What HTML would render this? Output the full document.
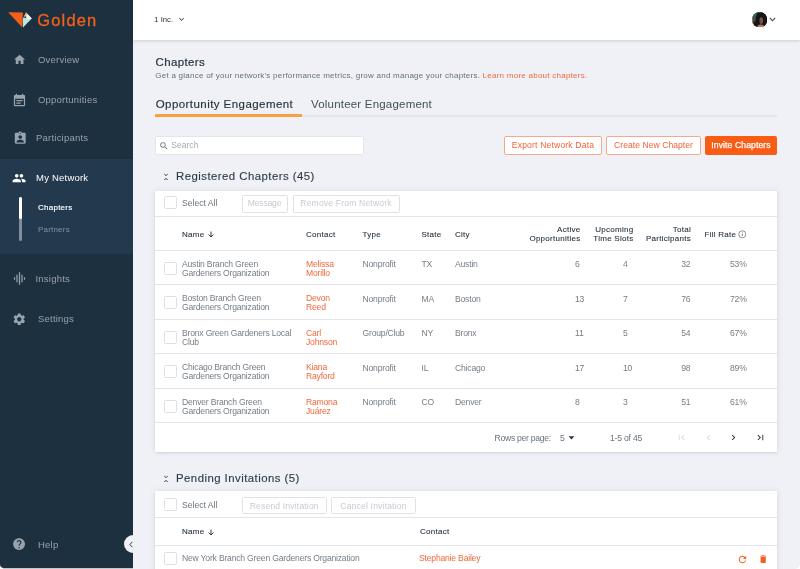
<!DOCTYPE html>
<html>
<head>
<meta charset="utf-8">
<title>Golden - Chapters</title>
<style>
*{box-sizing:border-box;margin:0;padding:0}
html,body{width:800px;height:569px;overflow:hidden}
body{font-family:"Liberation Sans",sans-serif;background:#eff1f6;color:#2d3a46;position:relative;font-size:8px}
#wrap{position:absolute;left:0;top:0;width:800px;height:569px;overflow:hidden;will-change:transform}
.abs,.t{position:absolute;white-space:nowrap}
.t{line-height:10px;transform:translateY(-50%)}
#side{position:absolute;left:0;top:0;width:133px;height:568px;background:#1c3040;border-bottom-left-radius:4px}
#side .act{position:absolute;left:0;top:159px;width:133px;height:95px;background:#233a4e}
.nav{color:#98a1a9;font-size:9.5px;letter-spacing:.22px}
.nav.on{color:#fff}
.sub{font-size:8px;letter-spacing:.2px;color:#8391a0}
.sub.on{color:#fff;letter-spacing:.25px;-webkit-text-stroke:.15px #fff}
#top{position:absolute;left:133px;top:0;width:667px;height:40px;background:#fff;box-shadow:0 1px 3px rgba(40,50,70,.18)}
.card{position:absolute;left:155px;width:622px;background:#fff;box-shadow:0 1px 2px rgba(40,50,70,.10),0 0 6px rgba(40,50,70,.10)}
.hl{position:absolute;left:0;width:622px;height:1px;background:#e3e5ea}
.cb{position:absolute;width:13px;height:13px;border:1px solid #dee1e4;border-radius:1.5px;background:#fff}
.btn{position:absolute;border:1px solid #f4a98f;border-radius:2px;background:#fff;color:#f4633a;font-size:8.600px;letter-spacing:.16px;text-align:center;line-height:16.800px;height:18.500px;white-space:nowrap}
.btn.fill{background:#f95c14;border-color:#f95c14;color:#fff;letter-spacing:.1px;-webkit-text-stroke:.25px #fff;border-radius:1.500px}
.btn.dis{border-color:#e0e3e6;color:#c6cbd1;border-radius:1.5px}
.h2{font-size:10.800px;letter-spacing:.43px;color:#2d3a46;-webkit-text-stroke:.12px #2d3a46;transform:translateY(-50%) scaleX(1.055);transform-origin:0 50%}
.th{font-size:8px;letter-spacing:.27px;color:#27333f;-webkit-text-stroke:.1px #27333f}
.td{font-size:8.600px;letter-spacing:-.2px;color:#757e87}
.or{color:#f2693c}
.r{text-align:right}
.l2{line-height:9.100px}
</style>
</head>
<body>
<div id="wrap">

<!-- SIDEBAR -->
<div class="abs" style="left:0;top:562px;width:8px;height:7px;background:#fff"></div>
<div class="abs" style="left:3px;top:568px;width:130px;height:1px;background:#c3c8cd"></div>
<div id="side">
  <div class="act"></div>
  <!-- logo -->
  <svg class="abs" style="left:7px;top:10px" width="28" height="20" viewBox="0 0 28 20">
    <polygon points="1.2,2.3 15.9,2.5 15.3,17.4" fill="#f4601c"/>
    <polygon points="15.8,9 19,2.6 24.8,8.6 16,17.4" fill="#bfe3df"/>
    <polygon points="19,2.6 24.8,8.6 20.5,9.5" fill="#f3f4f0"/>
    <polygon points="17.2,6.2 19,2.6 20.4,4.2" fill="#f7a83a"/>
    <circle cx="18.2" cy="7.2" r="0.9" fill="#1c3040"/>
  </svg>
  <div class="t" id="golden" style="left:37.300px;top:20px;font-size:16.5px;letter-spacing:1.150px;color:#f4601c;line-height:18px;-webkit-text-stroke:.3px #f4601c">Golden</div>

  <!-- Overview -->
  <svg class="abs" style="left:13.4px;top:53.2px" width="13.2" height="13.2" viewBox="0 0 24 24"><path fill="#97a3ad" d="M10 20v-6h4v6h5v-8h3L12 3 2 12h3v8z"/></svg>
  <div class="t nav" id="n1" style="left:38px;top:60px">Overview</div>

  <!-- Opportunities -->
  <svg class="abs" style="left:12.3px;top:92.6px" width="15" height="15" viewBox="0 0 24 24"><path fill="#97a3ad" d="M19 3h-1V1h-2v2H8V1H6v2H5c-1.1 0-2 .9-2 2v14c0 1.1.9 2 2 2h14c1.100 0 2-.9 2-2V5c0-1.100-.9-2-2-2zm0 16H5V9h14v10zM7 11h10v2H7zm0 4h7v2H7z"/></svg>
  <div class="t nav" id="n2" style="left:38px;top:100px">Opportunities</div>

  <!-- Participants -->
  <svg class="abs" style="left:12.5px;top:130.6px" width="14.5" height="14.5" viewBox="0 0 24 24"><path fill="#97a3ad" d="M19 3h-4.180C14.400 1.840 13.300 1 12 1s-2.400.84-2.820 2H5c-1.100 0-2 .9-2 2v14c0 1.100.9 2 2 2h14c1.100 0 2-.9 2-2V5c0-1.100-.9-2-2-2zm-7 0c.55 0 1 .45 1 1s-.45 1-1 1-1-.45-1-1 .45-1 1-1zm0 4c1.660 0 3 1.340 3 3s-1.340 3-3 3-3-1.340-3-3 1.340-3 3-3zm6 12H6v-1.400c0-2 4-3.100 6-3.100s6 1.100 6 3.100V19z"/></svg>
  <div class="t nav" id="n3" style="left:36px;top:138px">Participants</div>

  <!-- My Network -->
  <svg class="abs" style="left:12.4px;top:170.9px" width="14.2" height="14.2" viewBox="0 0 24 24"><path fill="#fff" d="M16 11c1.660 0 2.990-1.340 2.990-3S17.660 5 16 5c-1.660 0-3 1.340-3 3s1.340 3 3 3zm-8 0c1.660 0 2.990-1.340 2.990-3S9.660 5 8 5C6.340 5 5 6.340 5 8s1.340 3 3 3zm0 2c-2.330 0-7 1.170-7 3.500V19h14v-2.500c0-2.330-4.670-3.500-7-3.500zm8 0c-.29 0-.62.020-.97.050 1.160.84 1.970 1.970 1.970 3.450V19h6v-2.500c0-2.330-4.670-3.500-7-3.500z"/></svg>
  <div class="t nav on" id="n4" style="left:36px;top:178px">My Network</div>

  <div class="abs" style="left:18.500px;top:197px;width:3px;height:44px;background:#7c8e9a;border-radius:1.500px"></div>
  <div class="abs" style="left:18.500px;top:197px;width:3px;height:21.500px;background:#fff;border-radius:1.500px"></div>
  <div class="t sub on" id="s1" style="left:38px;top:207.500px">Chapters</div>
  <div class="t sub" id="s2" style="left:38px;top:230px">Partners</div>

  <!-- Insights -->
  <svg class="abs" style="left:12.1px;top:271.2px" width="15" height="15" viewBox="0 0 24 24"><path fill="#97a3ad" d="M7 18h2V6H7v12zm4 4h2V2h-2v20zm-8-8h2v-4H3v4zm12 4h2V6h-2v12zm4-8v4h2v-4h-2z"/></svg>
  <div class="t nav" id="n5" style="left:35.500px;top:279px">Insights</div>

  <!-- Settings -->
  <svg class="abs" style="left:12.35px;top:311.75px" width="14.5" height="14.5" viewBox="0 0 24 24"><path fill="#97a3ad" d="M19.140 12.940c.04-.3.060-.61.060-.94 0-.32-.02-.64-.07-.94l2.030-1.580a.49.490 0 0 0 .12-.61l-1.920-3.320a.488.488 0 0 0-.59-.22l-2.390.96c-.5-.38-1.030-.7-1.620-.94l-.36-2.540a.484.484 0 0 0-.48-.41h-3.840c-.24 0-.43.170-.47.410l-.36 2.540c-.59.240-1.130.57-1.620.94l-2.390-.96c-.22-.08-.47 0-.59.220L2.740 8.870c-.12.210-.08.470.12.610l2.030 1.580c-.05.300-.09.630-.09.940s.02.640.07.940l-2.030 1.580a.49.490 0 0 0-.12.610l1.920 3.320c.12.220.37.290.59.220l2.390-.96c.5.380 1.030.7 1.620.94l.36 2.540c.05.240.24.410.48.410h3.840c.24 0 .44-.17.470-.41l.36-2.540c.59-.24 1.130-.56 1.620-.94l2.390.96c.22.080.47 0 .59-.22l1.920-3.320c.12-.22.070-.47-.12-.61l-2.010-1.580zM12 15.600c-1.980 0-3.600-1.620-3.600-3.600s1.620-3.600 3.600-3.600 3.600 1.620 3.600 3.600-1.620 3.600-3.600 3.600z"/></svg>
  <div class="t nav" id="n6" style="left:38px;top:319px">Settings</div>

  <!-- Help -->
  <svg class="abs" style="left:12.400px;top:536.900px" width="14.200" height="14.200" viewBox="0 0 24 24"><path fill="#97a3ad" d="M12 2C6.480 2 2 6.480 2 12s4.480 10 10 10 10-4.480 10-10S17.520 2 12 2zm1 17h-2v-2h2v2zm2.070-7.750l-.9.920C13.450 12.900 13 13.500 13 15h-2v-.5c0-1.100.45-2.100 1.170-2.830l1.240-1.260c.37-.36.590-.86.590-1.410 0-1.100-.9-2-2-2s-2 .9-2 2H8c0-2.210 1.790-4 4-4s4 1.790 4 4c0 .88-.36 1.680-.93 2.250z"/></svg>
  <div class="t nav" id="n7" style="left:38px;top:544.500px">Help</div>

  <!-- collapse handle -->
  <div class="abs" style="left:124px;top:535px;width:18px;height:18px;border-radius:9px;background:#eff1f6"></div>
  <svg class="abs" style="left:128px;top:540px" width="6" height="9" viewBox="0 0 6 9"><path d="M4.300 1.900L1.900 4.500l2.400 2.600" fill="none" stroke="#27333f" stroke-width=".9"/></svg>
</div>

<div class="abs" style="left:796px;top:565px;width:4px;height:4px;background:radial-gradient(circle at 0 0,rgba(255,255,255,0) 3.200px,#fff 4px)"></div>
<!-- TOP BAR -->
<div id="top">
  <div class="t" id="inc" style="left:21.300px;top:20px;font-size:7.700px;letter-spacing:0;color:#27333f">1 Inc.</div>
  <svg class="abs" style="left:45px;top:17.300px" width="7" height="5" viewBox="0 0 7 5"><path d="M1.300.900L3.500 3.500 5.700.9" fill="none" stroke="#27333f" stroke-width=".95"/></svg>
  <!-- avatar -->
  <svg class="abs" style="left:618.900px;top:12px" width="15.400" height="15.400" viewBox="0 0 154 154">
    <defs><clipPath id="avc"><circle cx="77" cy="77" r="77"/></clipPath><filter id="avb" x="-20%" y="-20%" width="140%" height="140%"><feGaussianBlur stdDeviation="7"/></filter></defs>
    <g clip-path="url(#avc)">
      <rect width="154" height="154" fill="#1b1a1d"/>
      <g filter="url(#avb)">
        <rect x="-10" y="20" width="22" height="120" fill="#c4714a"/>
        <rect x="14" y="0" width="34" height="100" fill="#2c6468"/>
        <rect x="70" y="-6" width="60" height="22" fill="#3c6a50"/>
        <ellipse cx="92" cy="80" rx="58" ry="74" fill="#141214"/>
        <ellipse cx="93" cy="86" rx="19" ry="34" fill="#7a5240"/>
        <ellipse cx="88" cy="146" rx="34" ry="22" fill="#b07c60"/>
        <ellipse cx="36" cy="120" rx="16" ry="30" fill="#15151a"/>
      </g>
    </g>
  </svg>
  <svg class="abs" style="left:635.800px;top:17px" width="7" height="5" viewBox="0 0 7 5"><path d="M.8.900L3.500 3.600 6.200.9" fill="none" stroke="#4a4f55" stroke-width="1.100"/></svg>
</div>

<!-- PAGE TITLE -->
<div class="t" id="title" style="left:155.600px;top:62px;font-size:11.500px;letter-spacing:.35px;color:#27333f;line-height:14px;-webkit-text-stroke:.2px #27333f">Chapters</div>
<div class="t" id="subt" style="left:155.300px;top:76px;font-size:8px;letter-spacing:.25px;color:#65707a">Get a glance of your network's performance metrics, grow and manage your chapters. <span class="or">Learn more about chapters.</span></div>

<!-- TABS -->
<div class="t" id="tab1" style="left:155.700px;top:104px;font-size:11.500px;letter-spacing:.44px;color:#27333f;line-height:14px;-webkit-text-stroke:.15px #27333f">Opportunity Engagement</div>
<div class="t" id="tab2" style="left:311px;top:104px;font-size:11.500px;letter-spacing:.2px;color:#434f5a;line-height:14px">Volunteer Engagement</div>
<div class="abs" style="left:155px;top:115px;width:622px;height:2px;background:#e4e6ea"></div>
<div class="abs" style="left:155.300px;top:114.200px;width:147.200px;height:2.800px;background:#f99f40"></div>

<!-- SEARCH + BUTTONS -->
<div class="abs" style="left:155px;top:136px;width:208.500px;height:18.500px;background:#fff;border:1px solid #e3e5e9;border-radius:1.500px"></div>
<svg class="abs" style="left:159.200px;top:140.900px" width="10" height="10" viewBox="0 0 24 24"><path fill="#6a727a" d="M15.500 14h-.79l-.28-.27A6.470 6.470 0 0 0 16 9.500 6.500 6.500 0 1 0 9.500 16c1.610 0 3.090-.59 4.230-1.570l.27.280v.79l5 4.990L20.490 19l-4.990-5zm-6 0C7.010 14 5 11.990 5 9.500S7.010 5 9.500 5 14 7.010 14 9.500 11.990 14 9.500 14z"/></svg>
<div class="t" id="search" style="left:171.200px;top:145.300px;font-size:8.600px;letter-spacing:0;color:#a4abb3">Search</div>

<div class="btn" id="b1" style="left:504px;top:136.400px;width:98px">Export Network Data</div>
<div class="btn" id="b2" style="left:606px;top:136.400px;width:95px;letter-spacing:.03px">Create New Chapter</div>
<div class="btn fill" id="b3" style="left:705px;top:136.400px;width:72px">Invite Chapters</div>

<!-- REGISTERED CHAPTERS -->
<svg class="abs" style="left:162.500px;top:171.750px" width="6" height="10" viewBox="0 0 6 10"><path d="M1.300 2l1.700 1.700 1.700-1.700M1.300 8l1.700-1.700 1.700 1.700" fill="none" stroke="#27333f" stroke-width=".95"/></svg>
<div class="t h2" id="h2a" style="left:176px;top:176px;line-height:14px">Registered Chapters (45)</div>

<div class="card" id="card1" style="top:190.500px;height:261px">
  <div class="hl" style="top:25.5px"></div>
  <div class="hl" style="top:59.0px"></div>
  <div class="hl" style="top:93.5px"></div>
  <div class="hl" style="top:128.0px"></div>
  <div class="hl" style="top:162.5px"></div>
  <div class="hl" style="top:197.0px"></div>
  <div class="hl" style="top:231.5px"></div>

  <!-- toolbar -->
  <div class="cb" style="left:9px;top:5.500px"></div>
  <div class="t td" id="sel1" style="left:27px;top:12.600px;color:#69737c;letter-spacing:0">Select All</div>
  <div class="btn dis" id="d1" style="left:86.500px;top:4.500px;width:46px;height:17.500px;line-height:15.500px;letter-spacing:-.18px">Message</div>
  <div class="btn dis" id="d2" style="left:137.500px;top:4.500px;width:107px;height:17.500px;line-height:15.500px">Remove From Network</div>

  <!-- header -->
  <div class="t th" id="th1" style="left:27px;top:44.600px">Name<svg style="display:inline-block;vertical-align:-1.300px;margin-left:3.500px" width="6" height="7" viewBox="0 0 6 7"><path d="M3 .5v5.500M.6 3.500L3 6l2.400-2.500" fill="none" stroke="#27333f" stroke-width=".95"/></svg></div>
  <div class="t th" id="th2" style="left:151px;top:44.600px">Contact</div>
  <div class="t th" id="th3" style="left:207.500px;top:44.600px">Type</div>
  <div class="t th" id="th4" style="left:266.500px;top:44.600px">State</div>
  <div class="t th" id="th5" style="left:300px;top:44.600px">City</div>
  <div class="t th r" id="th6" style="right:196.500px;top:44.200px;line-height:8.900px">Active<br>Opportunities</div>
  <div class="t th r" id="th7" style="right:143.500px;top:44.200px;line-height:8.900px">Upcoming<br>Time Slots</div>
  <div class="t th r" id="th8" style="right:86px;top:44.200px;line-height:8.900px">Total<br>Participants</div>
  <div class="t th" id="th9" style="left:549.500px;top:44.600px">Fill Rate</div>
  <svg class="abs" style="left:582.500px;top:39.500px" width="8.600" height="8.600" viewBox="0 0 8 8"><circle cx="4" cy="4" r="3.300" fill="none" stroke="#4f5a65" stroke-width=".6"/><path d="M4 3.600v2M4 2.300v.7" stroke="#4f5a65" stroke-width=".7"/></svg>
  <!-- row 1 -->
  <div class="cb" style="left:9px;top:71.0px"></div>
  <div class="t td l2" id="r0n" style="left:27px;top:78.1px">Austin Branch Green<br>Gardeners Organization</div>
  <div class="t td l2 or" id="r0c" style="left:151px;top:78.1px">Melissa<br>Morillo</div>
  <div class="t td" id="r0t" style="left:207.5px;top:73.7px">Nonprofit</div>
  <div class="t td" id="r0s" style="left:266.5px;top:73.7px">TX</div>
  <div class="t td" id="r0ci" style="left:300px;top:73.7px">Austin</div>
  <div class="t td" id="r0a" style="left:420px;top:73.7px">6</div>
  <div class="t td" id="r0u" style="left:468px;top:73.7px">4</div>
  <div class="t td" id="r0p" style="left:526.2px;top:73.7px">32</div>
  <div class="t td" id="r0f" style="left:575px;top:73.7px">53%</div>
  <!-- row 2 -->
  <div class="cb" style="left:9px;top:105.5px"></div>
  <div class="t td l2" id="r1n" style="left:27px;top:112.6px">Boston Branch Green<br>Gardeners Organization</div>
  <div class="t td l2 or" id="r1c" style="left:151px;top:112.6px">Devon<br>Reed</div>
  <div class="t td" id="r1t" style="left:207.5px;top:108.2px">Nonprofit</div>
  <div class="t td" id="r1s" style="left:266.5px;top:108.2px">MA</div>
  <div class="t td" id="r1ci" style="left:300px;top:108.2px">Boston</div>
  <div class="t td" id="r1a" style="left:420px;top:108.2px">13</div>
  <div class="t td" id="r1u" style="left:468px;top:108.2px">7</div>
  <div class="t td" id="r1p" style="left:526.2px;top:108.2px">76</div>
  <div class="t td" id="r1f" style="left:575px;top:108.2px">72%</div>
  <!-- row 3 -->
  <div class="cb" style="left:9px;top:140.0px"></div>
  <div class="t td l2" id="r2n" style="left:27px;top:147.1px">Bronx Green Gardeners Local<br>Club</div>
  <div class="t td l2 or" id="r2c" style="left:151px;top:147.1px">Carl<br>Johnson</div>
  <div class="t td" id="r2t" style="left:207.5px;top:142.7px">Group/Club</div>
  <div class="t td" id="r2s" style="left:266.5px;top:142.7px">NY</div>
  <div class="t td" id="r2ci" style="left:300px;top:142.7px">Bronx</div>
  <div class="t td" id="r2a" style="left:420px;top:142.7px">11</div>
  <div class="t td" id="r2u" style="left:468px;top:142.7px">5</div>
  <div class="t td" id="r2p" style="left:526.2px;top:142.7px">54</div>
  <div class="t td" id="r2f" style="left:575px;top:142.7px">67%</div>
  <!-- row 4 -->
  <div class="cb" style="left:9px;top:174.5px"></div>
  <div class="t td l2" id="r3n" style="left:27px;top:181.6px">Chicago Branch Green<br>Gardeners Organization</div>
  <div class="t td l2 or" id="r3c" style="left:151px;top:181.6px">Kiana<br>Rayford</div>
  <div class="t td" id="r3t" style="left:207.5px;top:177.2px">Nonprofit</div>
  <div class="t td" id="r3s" style="left:266.5px;top:177.2px">IL</div>
  <div class="t td" id="r3ci" style="left:300px;top:177.2px">Chicago</div>
  <div class="t td" id="r3a" style="left:420px;top:177.2px">17</div>
  <div class="t td" id="r3u" style="left:468px;top:177.2px">10</div>
  <div class="t td" id="r3p" style="left:526.2px;top:177.2px">98</div>
  <div class="t td" id="r3f" style="left:575px;top:177.2px">89%</div>
  <!-- row 5 -->
  <div class="cb" style="left:9px;top:209.0px"></div>
  <div class="t td l2" id="r4n" style="left:27px;top:216.1px">Denver Branch Green<br>Gardeners Organization</div>
  <div class="t td l2 or" id="r4c" style="left:151px;top:216.1px">Ramona<br>Ju&aacute;rez</div>
  <div class="t td" id="r4t" style="left:207.5px;top:211.7px">Nonprofit</div>
  <div class="t td" id="r4s" style="left:266.5px;top:211.7px">CO</div>
  <div class="t td" id="r4ci" style="left:300px;top:211.7px">Denver</div>
  <div class="t td" id="r4a" style="left:420px;top:211.7px">8</div>
  <div class="t td" id="r4u" style="left:468px;top:211.7px">3</div>
  <div class="t td" id="r4p" style="left:526.2px;top:211.7px">51</div>
  <div class="t td" id="r4f" style="left:575px;top:211.7px">61%</div>
  <!-- pagination -->
  <div class="t td" id="pg1" style="left:339.5px;top:247px;color:#69737c;letter-spacing:-.27px">Rows per page:</div>
  <div class="t td" id="pg2" style="left:405px;top:247px;color:#69737c">5</div>
  <svg class="abs" style="left:412.5px;top:245px" width="7" height="4" viewBox="0 0 7 4"><path d="M.6.3h5.800L3.500 3.500z" fill="#27333f"/></svg>
  <div class="t td" id="pg3" style="left:455px;top:247px;color:#69737c">1-5 of 45</div>
  <svg class="abs" style="left:521px;top:241.5px" width="11" height="11" viewBox="0 0 24 24"><path fill="#d5d9dd" d="M18.410 16.590L13.820 12l4.590-4.590L17 6l-6 6 6 6zM6 6h2v12H6z"/></svg>
  <svg class="abs" style="left:547.5px;top:241.5px" width="11" height="11" viewBox="0 0 24 24"><path fill="#d5d9dd" d="M15.410 7.410L14 6l-6 6 6 6 1.410-1.410L10.830 12z"/></svg>
  <svg class="abs" style="left:573px;top:241.5px" width="11" height="11" viewBox="0 0 24 24"><path fill="#27333f" d="M10 6L8.590 7.410 13.170 12l-4.580 4.590L10 18l6-6z"/></svg>
  <svg class="abs" style="left:600px;top:241.5px" width="11" height="11" viewBox="0 0 24 24"><path fill="#27333f" d="M5.590 7.410L10.180 12l-4.590 4.590L7 18l6-6-6-6zM16 6h2v12h-2z"/></svg>
</div>


<!-- PENDING -->
<svg class="abs" style="left:162.500px;top:473.500px" width="6" height="10" viewBox="0 0 6 10"><path d="M1.300 2l1.700 1.700 1.700-1.700M1.300 8l1.700-1.700 1.700 1.700" fill="none" stroke="#27333f" stroke-width=".95"/></svg>
<div class="t h2" id="h2b" style="left:176px;top:477.800px;line-height:14px">Pending Invitations (5)</div>

<div class="card" id="card2" style="top:491.300px;height:90px">
  <div class="hl" style="top:26px"></div>
  <div class="hl" style="top:53.500px"></div>
  <div class="cb" style="left:9px;top:6.500px"></div>
  <div class="t td" id="sel2" style="left:27px;top:14px;color:#69737c;letter-spacing:0">Select All</div>
  <div class="btn dis" id="d3" style="left:87px;top:5.300px;width:84.500px;height:17.500px;line-height:16.500px">Resend Invitation</div>
  <div class="btn dis" id="d4" style="left:176px;top:5.300px;width:85px;height:17.500px;line-height:16.500px">Cancel Invitation</div>
  <div class="t th" id="th10" style="left:27px;top:41px">Name<svg style="display:inline-block;vertical-align:-1.300px;margin-left:3.500px" width="6" height="7" viewBox="0 0 6 7"><path d="M3 .5v5.500M.6 3.500L3 6l2.400-2.500" fill="none" stroke="#27333f" stroke-width=".95"/></svg></div>
  <div class="t th" id="th11" style="left:265px;top:41px">Contact</div>
  <div class="cb" style="left:9px;top:60.500px"></div>
  <div class="t td" id="p1" style="left:27px;top:67px">New York Branch Green Gardeners Organization</div>
  <div class="t td or" id="p2" style="left:264px;top:67px">Stephanie Bailey</div>
  <svg class="abs" style="left:582px;top:62.400px" width="11" height="11" viewBox="0 0 24 24"><path fill="#f4601c" d="M17.650 6.350A7.958 7.958 0 0 0 12 4c-4.420 0-7.990 3.580-7.990 8s3.570 8 7.990 8c3.730 0 6.840-2.550 7.730-6h-2.080A5.990 5.990 0 0 1 12 18c-3.310 0-6-2.690-6-6s2.690-6 6-6c1.660 0 3.140.69 4.220 1.780L13 11h7V4l-2.350 2.350z"/></svg>
  <svg class="abs" style="left:602.800px;top:62.800px" width="10.400" height="10.400" viewBox="0 0 24 24"><path fill="#f4601c" d="M6 19c0 1.100.9 2 2 2h8c1.100 0 2-.9 2-2V7H6v12zM19 4h-3.500l-1-1h-5l-1 1H5v2h14V4z"/></svg>
</div>

</div>
</body>
</html>
